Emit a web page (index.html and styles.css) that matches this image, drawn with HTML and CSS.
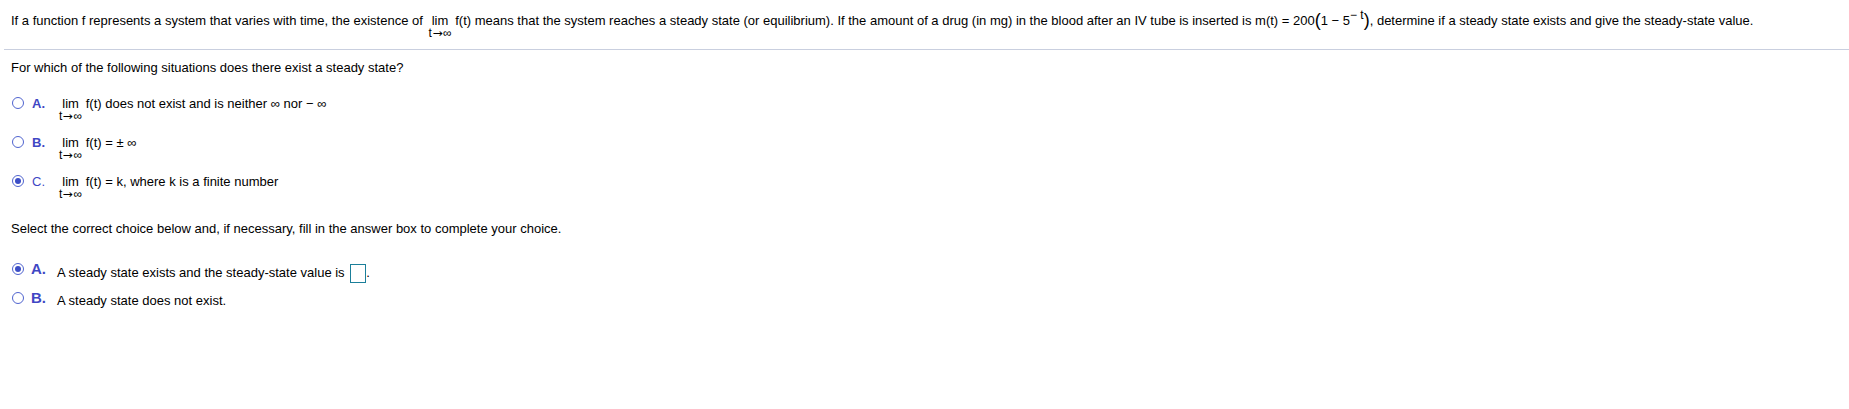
FILE: index.html
```html
<!DOCTYPE html>
<html>
<head>
<meta charset="utf-8">
<link rel="stylesheet" href="styles.css">
</head>
<body>
<div class="stem">
  <p class="intro">If a function f represents a system that varies with time, the existence of <span class="lim"><span class="lim-word">lim</span><span class="lim-sub">t<span class="arrow">→</span>∞</span></span> f(t) means that the system reaches a steady state (or equilibrium). If the amount of a drug (in mg) in the blood after an IV tube is inserted is m(t) = 200<span class="paren">(</span>1 − 5<sup class="exp">− t</sup><span class="paren">)</span>, determine if a steady state exists and give the steady-state value.</p>
</div>
<div class="body">
  <p class="q">For which of the following situations does there exist a steady state?</p>
  <ul class="choices first">
    <li class="choice"><span class="radio"></span><span class="letter">A.</span><span class="ctext"><span class="lim"><span class="lim-word">lim</span><span class="lim-sub">t<span class="arrow">→</span>∞</span></span> f(t) does not exist and is neither ∞ nor − ∞</span></li>
    <li class="choice"><span class="radio"></span><span class="letter">B.</span><span class="ctext"><span class="lim"><span class="lim-word">lim</span><span class="lim-sub">t<span class="arrow">→</span>∞</span></span> f(t) = ± ∞</span></li>
    <li class="choice"><span class="radio on"></span><span class="letter plain">C.</span><span class="ctext"><span class="lim"><span class="lim-word">lim</span><span class="lim-sub">t<span class="arrow">→</span>∞</span></span> f(t) = k, where k is a finite number</span></li>
  </ul>
  <p class="q select">Select the correct choice below and, if necessary, fill in the answer box to complete your choice.</p>
  <ul class="choices second">
    <li class="choice2"><span class="radio on"></span><span class="letter big">A.</span><span class="ctext2">A steady state exists and the steady-state value is <span class="box"></span>.</span></li>
    <li class="choice2"><span class="radio"></span><span class="letter big">B.</span><span class="ctext2">A steady state does not exist.</span></li>
  </ul>
</div>
</body>
</html>
```
FILE: styles.css
```css
html, body {
  margin: 0;
  padding: 0;
  background: #fff;
}
body {
  font-family: "Liberation Sans", Arial, sans-serif;
  font-size: 13px;
  color: #000;
}
p { margin: 0; }
.stem {
  margin-left: 4px;
  padding: 13px 0 0 7px;
  height: 36px;
  border-bottom: 1px solid #c9cfdf;
}
.intro {
  line-height: 15px;
  white-space: nowrap;
}
.lim {
  display: inline-flex;
  flex-direction: column;
  align-items: center;
  vertical-align: top;
  line-height: 15px;
  margin-left: 2px;
}
.lim-sub {
  font-size: 12px;
  line-height: 11px;
  white-space: nowrap;
}
.arrow {
  font-family: "DejaVu Sans", sans-serif;
  font-size: 11px;
  display: inline-block;
  transform: scaleX(1.1);
  margin: 0 1px;
}
.paren {
  font-size: 18px;
  line-height: 15px;
  vertical-align: -1px;
  font-weight: 300;
}
.exp {
  font-size: 12px;
  line-height: 0;
  vertical-align: 6px;
}
.body {
  padding: 10px 0 0 11px;
}
.q {
  line-height: 15px;
}
.choices {
  list-style: none;
  margin: 0;
  padding: 0;
}
.first {
  margin-top: 21px;
}
.choice {
  display: flex;
  align-items: flex-start;
  height: 39px;
}
.radio {
  width: 10px;
  height: 10px;
  border: 1.5px solid #5064cf;
  border-radius: 50%;
  margin-left: 1px;
  margin-top: 1px;
  flex: none;
  position: relative;
  box-sizing: content-box;
}
.radio.on::after {
  content: "";
  position: absolute;
  left: 2px;
  top: 2px;
  width: 6px;
  height: 6px;
  border-radius: 50%;
  background: #3c4ec6;
}
.letter {
  color: #3f47c4;
  font-weight: bold;
  margin-left: 8px;
  width: 27px;
  line-height: 15px;
  flex: none;
}
.letter.plain {
  font-weight: normal;
}
.ctext {
  line-height: 15px;
}
.ctext .lim {
  margin-left: 0;
}
.select {
  margin-top: 8px;
}
.second {
  margin-top: 25px;
}
.choice2 {
  display: flex;
  align-items: flex-start;
  height: 29px;
}
.choice2 .radio {
  margin-top: 2px;
}
.letter.big {
  font-size: 15px;
  line-height: 15px;
  width: 26px;
  margin-left: 7px;
}
.ctext2 {
  line-height: 15px;
  padding-top: 3px;
}
.box {
  display: inline-block;
  width: 14px;
  height: 17px;
  border: 1.5px solid #1b7f9a;
  vertical-align: -6px;
  margin-left: 2px;
}
```
